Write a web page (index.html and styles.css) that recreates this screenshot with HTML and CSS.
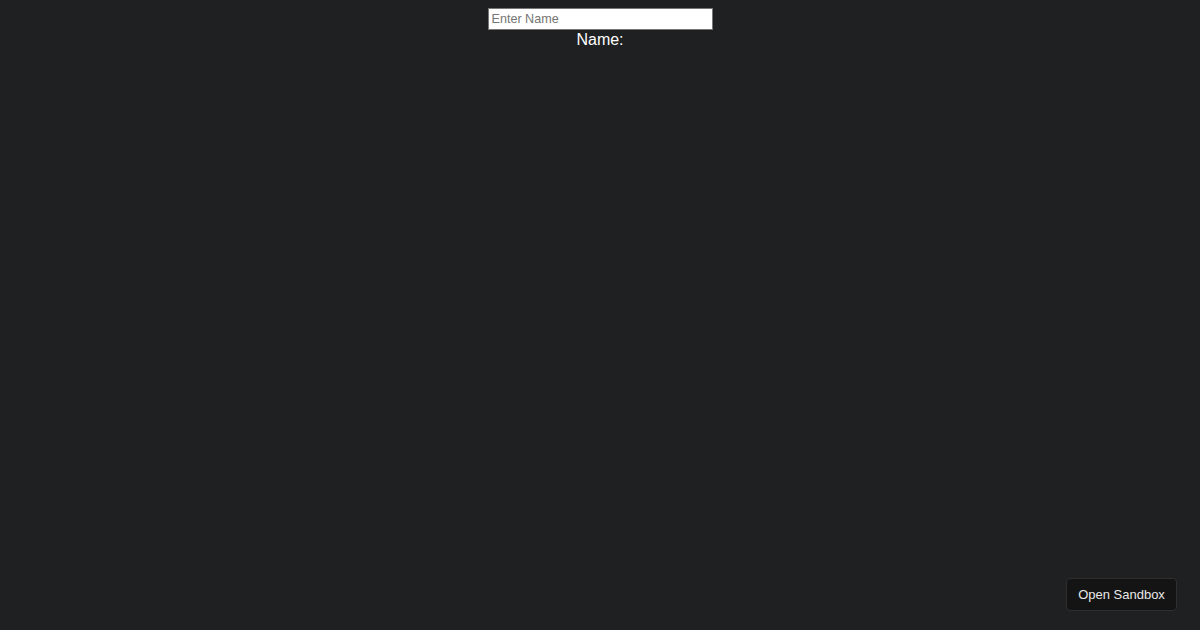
FILE: index.html
```html
<!DOCTYPE html>
<html>
<head>
<meta charset="utf-8">
<link rel="stylesheet" href="styles.css">
</head>
<body>
<div class="app">
  <input class="name-input" type="text" placeholder="Enter Name">
  <div class="name-label">Name:</div>
</div>
<button class="sandbox-btn">Open Sandbox</button>
</body>
</html>
```
FILE: styles.css
```css
html, body {
  background: #1f2022;
}
body {
  margin: 8px;
  font-family: "Liberation Sans", Arial, sans-serif;
  color: #ffffff;
  height: 614px;
  overflow: hidden;
}
.app {
  display: flex;
  flex-direction: column;
  align-items: center;
}
.name-input {
  width: 225px;
  height: 22px;
  box-sizing: border-box;
  border: 1px solid #767676;
  background: #ffffff;
  padding: 1px 3px;
  font-family: "Liberation Sans", Arial, sans-serif;
  font-size: 12.6px;
  color: #000;
  margin: 0;
}
.name-input::placeholder {
  color: #757575;
}
.name-label {
  font-size: 16px;
  line-height: 18px;
  margin-top: 1px;
}
.sandbox-btn {
  position: fixed;
  right: 23px;
  bottom: 19px;
  width: 111px;
  height: 33px;
  background: #141414;
  border: 1px solid #2f2f2f;
  border-radius: 4px;
  color: #e8e8e8;
  font-family: "Liberation Sans", Arial, sans-serif;
  font-size: 13px;
  padding: 0;
}
```
